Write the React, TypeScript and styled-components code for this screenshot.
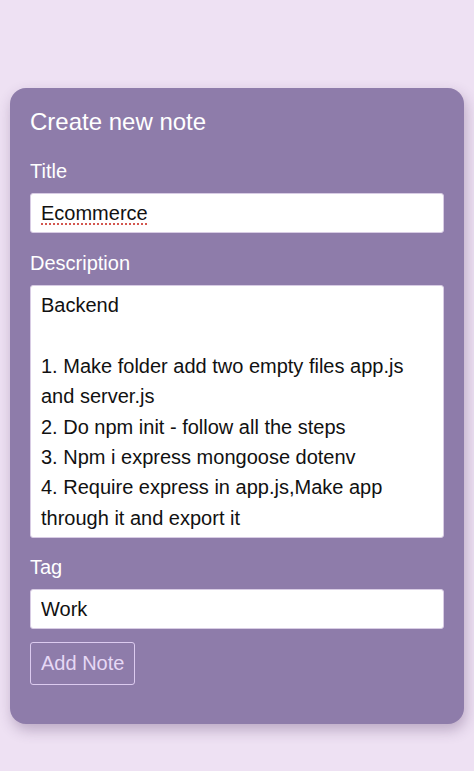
import React, { useState } from "react";
import styled, { createGlobalStyle } from "styled-components";

const GlobalStyle = createGlobalStyle`
  html, body {
    margin: 0;
    padding: 0;
    background: #eee1f3;
    font-family: "Liberation Sans", Arial, sans-serif;
  }
`;

const Page = styled.div`
  min-height: 771px;
  padding: 88px 10px 0;
  box-sizing: border-box;
`;

const Card = styled.form`
  background: #8e7caa;
  border-radius: 16px;
  padding: 21px 20px 39px;
  box-shadow: 2px 6px 14px rgba(70, 40, 90, 0.3);
  display: flex;
  flex-direction: column;
`;

const Heading = styled.h2`
  margin: 0 0 26px;
  font-size: 24px;
  line-height: 26px;
  font-weight: 400;
  color: #ffffff;
`;

const Label = styled.label`
  font-size: 20px;
  line-height: 21px;
  color: #ffffff;
  margin-bottom: 11px;
`;

const TextInput = styled.input<{ $gap?: number; $misspelled?: boolean }>`
  height: 40px;
  box-sizing: border-box;
  border: 1px solid #d8cce4;
  border-radius: 3px;
  padding: 0 10px;
  font-family: "Liberation Sans", Arial, sans-serif;
  font-size: 20px;
  color: #111;
  background: #fff;
  margin-bottom: ${(p) => p.$gap ?? 20}px;
  outline: none;
  text-decoration: ${(p) => (p.$misspelled ? "underline dotted #d4574f" : "none")};
  text-underline-offset: 4px;
`;

const TextArea = styled.textarea`
  height: 253px;
  box-sizing: border-box;
  border: 1px solid #d8cce4;
  border-radius: 3px;
  padding: 4px 10px;
  font-family: "Liberation Sans", Arial, sans-serif;
  font-size: 20px;
  line-height: 30.4px;
  color: #111;
  background: #fff;
  margin-bottom: 19px;
  resize: none;
  overflow: hidden;
  outline: none;
`;

const SubmitButton = styled.button`
  align-self: flex-start;
  height: 43px;
  padding: 0 10px;
  background: transparent;
  border: 1px solid #dccbef;
  border-radius: 3px;
  color: #e6d8f5;
  font-family: "Liberation Sans", Arial, sans-serif;
  font-size: 20px;
  cursor: pointer;
`;

const initialDescription = `Backend

1. Make folder add two empty files app.js and server.js
2. Do npm init - follow all the steps
3. Npm i express mongoose dotenv
4. Require express in app.js,Make app through it and export it`;

export default function App() {
  const [title, setTitle] = useState("Ecommerce");
  const [description, setDescription] = useState(initialDescription);
  const [tag, setTag] = useState("Work");

  return (
    <>
      <GlobalStyle />
      <Page>
        <Card onSubmit={(e) => e.preventDefault()}>
          <Heading>Create new note</Heading>
          <Label htmlFor="title">Title</Label>
          <TextInput
            id="title"
            $misspelled
            value={title}
            onChange={(e) => setTitle(e.target.value)}
          />
          <Label htmlFor="description">Description</Label>
          <TextArea
            id="description"
            value={description}
            onChange={(e) => setDescription(e.target.value)}
          />
          <Label htmlFor="tag">Tag</Label>
          <TextInput
            id="tag"
            $gap={13}
            value={tag}
            onChange={(e) => setTag(e.target.value)}
          />
          <SubmitButton type="submit">Add Note</SubmitButton>
        </Card>
      </Page>
    </>
  );
}
